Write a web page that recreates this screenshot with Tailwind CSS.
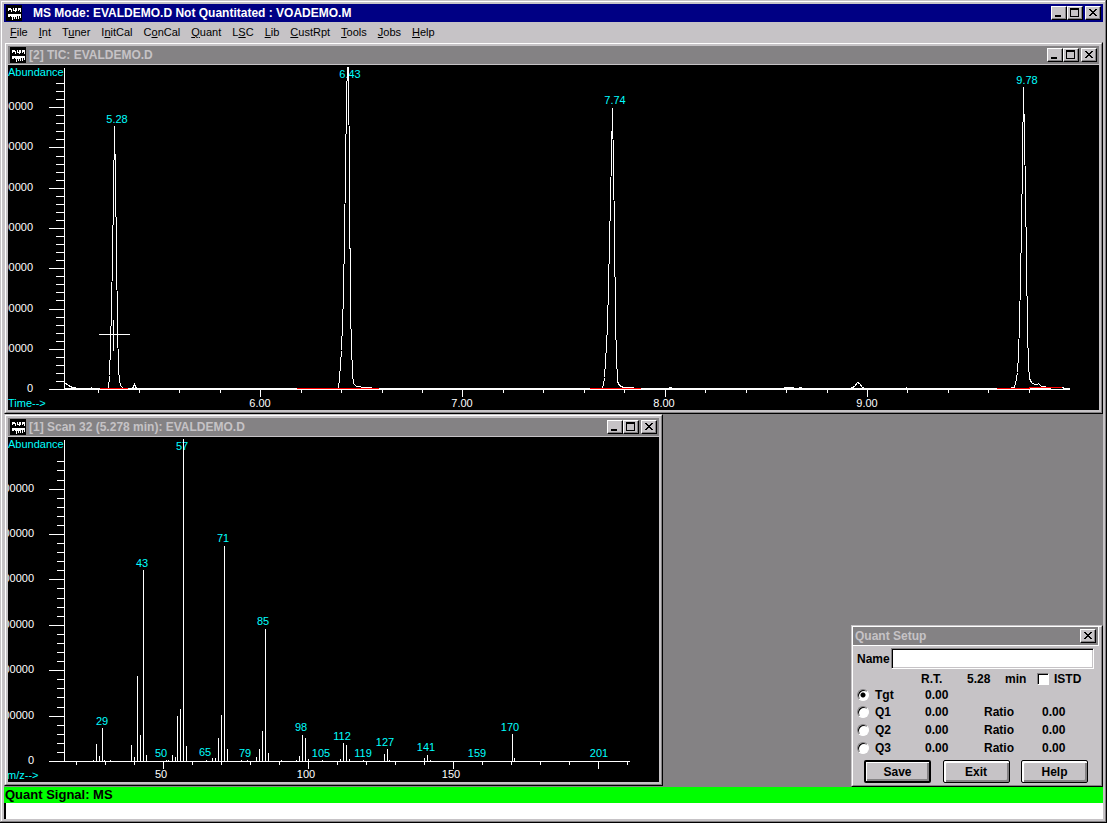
<!DOCTYPE html>
<html lang="en">
<head>
    <meta charset="UTF-8">
    <meta name="viewport" content="width=device-width, initial-scale=1.0">
    <title>MS Mode: EVALDEMO.D</title>
    <script src="https://cdn.jsdelivr.net/npm/@tailwindcss/browser@4"></script>
</head>
<body class="h-screen overflow-hidden bg-[#c6c3c6] font-['Liberation_Sans',Arial,sans-serif] text-[11px] leading-4 text-black">
    <!-- Shared glyphs -->
    <svg class="hidden">
        <symbol id="app-icon" viewBox="0 0 16 16">
            <rect width="16" height="16" fill="#000"/>
            <path fill="#fff" d="M2 3h3v1h1v3H5V5H3v1H2zM7 3h1v2h1V3h2v3h-1v1H9V6H7zM12 3h3v4h-1V5h-1v1h-1zM2 9h13v4h-1v-2h-1v3h-1v-3h-1v3h-1v-2H9v2H8v-2H7v3H6v-3H5v-1H4v1H2z"/>
        </symbol>
        <symbol id="minimize" viewBox="0 0 12 10"><path fill="#000" d="M2 7h6v2H2z"/></symbol>
        <symbol id="maximize" viewBox="0 0 12 10"><path fill="#000" fill-rule="evenodd" d="M1 0h9v9H1zM2 2v6h7V2z"/></symbol>
        <symbol id="close" viewBox="0 0 12 10"><path fill="#000" d="M2 1h2v1h1v1h2V2h1V1h2v1H9v1H8v1H7v1h1v1h1v1h1v1H8V7H7V6H5v1H4v1H2V7h1V6h1V5h1V4H4V3H3V2H2z"/></symbol>
    </svg>

    <div class="flex h-full flex-col border-r border-b border-black">
        <div class="flex min-h-0 flex-1 flex-col border border-t-[#c6c3c6] border-l-[#c6c3c6] border-r-[#848284] border-b-[#848284]">
            <div class="flex min-h-0 flex-1 flex-col border-t border-l border-white p-[2px]">

                <!-- Main title bar -->
                <header class="flex h-[18px] shrink-0 items-center bg-[#000084] px-[2px] text-white">
                    <svg class="h-4 w-4" shape-rendering="crispEdges"><use href="#app-icon"/></svg>
                    <h1 class="ml-[11px] flex-1 text-[12px] font-bold whitespace-nowrap">MS Mode: EVALDEMO.D Not Quantitated : VOADEMO.M</h1>
                    <button aria-label="Minimize" class="h-[14px] w-4 border border-t-white border-l-white border-r-black border-b-black bg-[#c6c3c6] pl-px shadow-[inset_-1px_-1px_#848284]"><svg class="h-[10px] w-3" shape-rendering="crispEdges"><use href="#minimize"/></svg></button>
                    <button aria-label="Maximize" class="h-[14px] w-4 border border-t-white border-l-white border-r-black border-b-black bg-[#c6c3c6] pl-px shadow-[inset_-1px_-1px_#848284]"><svg class="h-[10px] w-3" shape-rendering="crispEdges"><use href="#maximize"/></svg></button>
                    <button aria-label="Close" class="ml-[2px] h-[14px] w-4 border border-t-white border-l-white border-r-black border-b-black bg-[#c6c3c6] pl-px shadow-[inset_-1px_-1px_#848284]"><svg class="h-[10px] w-3" shape-rendering="crispEdges"><use href="#close"/></svg></button>
                </header>

                <!-- Menu -->
                <nav class="flex h-5 shrink-0 items-center gap-[11px] pl-[6px]">
                    <button><u>F</u>ile</button>
                    <button><u>I</u>nt</button>
                    <button>T<u>u</u>ner</button>
                    <button>I<u>n</u>itCal</button>
                    <button>C<u>o</u>nCal</button>
                    <button><u>Q</u>uant</button>
                    <button>L<u>S</u>C</button>
                    <button><u>L</u>ib</button>
                    <button><u>C</u>ustRpt</button>
                    <button><u>T</u>ools</button>
                    <button><u>J</u>obs</button>
                    <button><u>H</u>elp</button>
                </nav>

                <!-- MDI desktop -->
                <main class="relative min-h-0 flex-1 bg-[#848284]">

                    <!-- TIC window -->
                    <section class="absolute inset-x-0 top-0 flex h-[372px] flex-col border border-t-[#c6c3c6] border-l-[#c6c3c6] border-r-black border-b-black bg-[#c6c3c6]">
                        <div class="flex min-h-0 flex-1 flex-col border border-t-white border-l-white border-r-[#848284] border-b-[#848284] p-[2px]">
                            <div class="flex h-[18px] shrink-0 items-center bg-[#848284] px-[2px] text-[#c6c3c6]">
                                <svg class="h-4 w-4" shape-rendering="crispEdges"><use href="#app-icon"/></svg>
                                <h2 class="ml-[3px] flex-1 text-[12px] font-bold whitespace-nowrap">[2] TIC: EVALDEMO.D</h2>
                                <button aria-label="Minimize" class="h-[14px] w-4 border border-t-white border-l-white border-r-black border-b-black bg-[#c6c3c6] pl-px shadow-[inset_-1px_-1px_#848284]"><svg class="h-[10px] w-3" shape-rendering="crispEdges"><use href="#minimize"/></svg></button>
                                <button aria-label="Maximize" class="h-[14px] w-4 border border-t-white border-l-white border-r-black border-b-black bg-[#c6c3c6] pl-px shadow-[inset_-1px_-1px_#848284]"><svg class="h-[10px] w-3" shape-rendering="crispEdges"><use href="#maximize"/></svg></button>
                                <button aria-label="Close" class="ml-[2px] h-[14px] w-4 border border-t-white border-l-white border-r-black border-b-black bg-[#c6c3c6] pl-px shadow-[inset_-1px_-1px_#848284]"><svg class="h-[10px] w-3" shape-rendering="crispEdges"><use href="#close"/></svg></button>
                            </div>
                            <div class="mt-px min-h-0 flex-1 bg-black">
                                <svg class="block h-full w-full overflow-hidden" stroke="#fff" stroke-linecap="square" fill="none" shape-rendering="crispEdges">
                                    <g id="ticLabels" stroke="none" fill="#fff" transform="translate(-8 -65)">
                                        <g fill="#0ff">
                                            <text x="8" y="76">Abundance</text>
                                            <text x="8" y="407">Time--&gt;</text>
                                            <text x="117" y="123" text-anchor="middle">5.28</text>
                                            <text x="350" y="78" text-anchor="middle">6.43</text>
                                            <text x="615" y="104" text-anchor="middle">7.74</text>
                                            <text x="1027" y="84" text-anchor="middle">9.78</text>
                                        </g>
                                        <text x="260" y="407" text-anchor="middle">6.00</text>
                                        <text x="462" y="407" text-anchor="middle">7.00</text>
                                        <text x="664" y="407" text-anchor="middle">8.00</text>
                                        <text x="867" y="407" text-anchor="middle">9.00</text>
                                    </g>
                                    <g transform="translate(-7.5 -64.5)">
                                        <path id="ticAxis"/>
                                        <path d="M64 388H1050"/>
                                        <path d="M64 382L68 385L72 387L79 388H90L91 387L92 388H108L109 375L110 345L111 307L112 257L113 195L114 126L115 180L116 251L117 327L118 368L119 380L120 385L123 388H132L134 384L136 388H338L339 378L341 350L343 295L345 174L346 95L347 67"/>
                                        <path d="M348 67L349 180L350 311L351 345L352 374L353 383L356 386L365 387L378 388H602L603 384L604 377L605 361L606 344L607 325L608 285L610 200L612 108L614 230L615 322L616 356L617 381L619 385L623 387H632L635 388H668L670 387L673 388H782L785 387H792L794 388H798L800 387L803 388H850L854 386L857 382L859 383L862 387L865 388H905L906 387L907 388H1008L1014 387L1016 378L1017 372L1018 353L1019 324L1021 230L1023 87L1025 190L1027 330L1028 365L1029 378L1031 382L1034 384H1037L1038 383L1041 386L1050 387H1062L1064 388H1069"/>
                                        <path stroke="#f00" d="M100 388H127M297 388H378M590 388H640M997 388H1029M1029 387H1061"/>
                                        <path d="M99 334H129M113 320V350"/>
                                    </g>
                                </svg>
                            </div>
                        </div>
                    </section>

                    <!-- Scan window -->
                    <section class="absolute top-[372px] left-0 flex h-[372px] w-[60%] max-w-[659px] flex-col border border-t-[#c6c3c6] border-l-[#c6c3c6] border-r-black border-b-black bg-[#c6c3c6]">
                        <div class="flex min-h-0 flex-1 flex-col border border-t-white border-l-white border-r-[#848284] border-b-[#848284] p-[2px]">
                            <div class="flex h-[18px] shrink-0 items-center bg-[#848284] px-[2px] text-[#c6c3c6]">
                                <svg class="h-4 w-4" shape-rendering="crispEdges"><use href="#app-icon"/></svg>
                                <h2 class="ml-[3px] flex-1 text-[12px] font-bold whitespace-nowrap">[1] Scan 32 (5.278 min): EVALDEMO.D</h2>
                                <button aria-label="Minimize" class="h-[14px] w-4 border border-t-white border-l-white border-r-black border-b-black bg-[#c6c3c6] pl-px shadow-[inset_-1px_-1px_#848284]"><svg class="h-[10px] w-3" shape-rendering="crispEdges"><use href="#minimize"/></svg></button>
                                <button aria-label="Maximize" class="h-[14px] w-4 border border-t-white border-l-white border-r-black border-b-black bg-[#c6c3c6] pl-px shadow-[inset_-1px_-1px_#848284]"><svg class="h-[10px] w-3" shape-rendering="crispEdges"><use href="#maximize"/></svg></button>
                                <button aria-label="Close" class="ml-[2px] h-[14px] w-4 border border-t-white border-l-white border-r-black border-b-black bg-[#c6c3c6] pl-px shadow-[inset_-1px_-1px_#848284]"><svg class="h-[10px] w-3" shape-rendering="crispEdges"><use href="#close"/></svg></button>
                            </div>
                            <div class="mt-px min-h-0 flex-1 bg-black">
                                <svg class="block h-full w-full overflow-hidden" stroke="#fff" stroke-linecap="square" fill="none" shape-rendering="crispEdges">
                                    <g id="scanLabels" stroke="none" fill="#fff" transform="translate(-8 -437)">
                                        <text x="8" y="448" fill="#0ff">Abundance</text>
                                        <text x="7" y="779" fill="#0ff">m/z--&gt;</text>
                                        <text x="161" y="778" text-anchor="middle">50</text>
                                        <text x="306" y="778" text-anchor="middle">100</text>
                                        <text x="451" y="778" text-anchor="middle">150</text>
                                    </g>
                                    <g transform="translate(-7.5 -436.5)">
                                        <path id="scanAxis"/>
                                        <path id="scanSticks"/>
                                    </g>
                                </svg>
                            </div>
                        </div>
                    </section>

                    <!-- Quant Setup dialog -->
                    <form class="absolute right-0 bottom-0 flex h-[162px] w-[252px] flex-col border border-t-[#c6c3c6] border-l-[#c6c3c6] border-r-black border-b-black bg-[#c6c3c6] text-[12px] font-bold" onsubmit="return false">
                        <div class="flex flex-1 flex-col border border-t-white border-l-white border-r-[#848284] border-b-[#848284]">
                            <div class="mr-[2px] flex h-[19px] shrink-0 items-center border-r border-b border-white bg-[#848284] px-[2px] text-[#c6c3c6]">
                                <h2 class="flex-1">Quant Setup</h2>
                                <button type="button" aria-label="Close" class="h-[14px] w-4 border border-t-white border-l-white border-r-black border-b-black bg-[#c6c3c6] pl-px shadow-[inset_-1px_-1px_#848284]"><svg class="h-[10px] w-3" shape-rendering="crispEdges"><use href="#close"/></svg></button>
                            </div>
                            <div class="mt-[2px] flex items-center pr-[7px] pl-1">
                                <label for="name" class="w-[34px]">Name</label>
                                <input id="name" type="text" class="h-[21px] min-w-0 flex-1 border border-t-[#848284] border-l-[#848284] border-r-white border-b-white bg-white px-1 shadow-[inset_1px_1px_#000,inset_-1px_-1px_#c6c3c6] outline-none">
                            </div>
                            <div class="mt-[2px] flex items-center pl-[68px]">
                                <span class="w-[46px]">R.T.</span>
                                <span class="w-[38px]">5.28</span>
                                <span class="w-[32px]">min</span>
                                <input id="istd" type="checkbox" class="mr-[5px] h-3 w-3 appearance-none border border-t-[#848284] border-l-[#848284] border-r-white border-b-white bg-white shadow-[inset_1px_1px_#000] checked:bg-black">
                                <label for="istd">ISTD</label>
                            </div>
                            <div class="grid grid-cols-[18px_50px_59px_58px_1fr] grid-rows-[16px_18px_18px_18px] items-center pl-1">
                                <input id="tgt" name="ion" type="radio" checked class="h-3 w-3 appearance-none rounded-full border border-t-[#848284] border-l-[#848284] border-r-white border-b-white bg-white shadow-[inset_1px_1px_#000] checked:bg-[radial-gradient(circle,#000_2px,#fff_3px)]">
                                <label for="tgt">Tgt</label><span>0.00</span><span></span><span></span>
                                <input id="q1" name="ion" type="radio" class="h-3 w-3 appearance-none rounded-full border border-t-[#848284] border-l-[#848284] border-r-white border-b-white bg-white shadow-[inset_1px_1px_#000] checked:bg-[radial-gradient(circle,#000_2px,#fff_3px)]">
                                <label for="q1">Q1</label><span>0.00</span><span>Ratio</span><span>0.00</span>
                                <input id="q2" name="ion" type="radio" class="h-3 w-3 appearance-none rounded-full border border-t-[#848284] border-l-[#848284] border-r-white border-b-white bg-white shadow-[inset_1px_1px_#000] checked:bg-[radial-gradient(circle,#000_2px,#fff_3px)]">
                                <label for="q2">Q2</label><span>0.00</span><span>Ratio</span><span>0.00</span>
                                <input id="q3" name="ion" type="radio" class="h-3 w-3 appearance-none rounded-full border border-t-[#848284] border-l-[#848284] border-r-white border-b-white bg-white shadow-[inset_1px_1px_#000] checked:bg-[radial-gradient(circle,#000_2px,#fff_3px)]">
                                <label for="q3">Q3</label><span>0.00</span><span>Ratio</span><span>0.00</span>
                            </div>
                            <div class="mt-[3px] flex justify-between pr-[13px] pl-[11px]">
                                <button class="h-[23px] w-[67px] rounded-[2px] border-2 border-black bg-[#c6c3c6] leading-4 shadow-[inset_1px_1px_#fff,inset_-2px_-2px_#848284]">Save</button>
                                <button type="button" class="h-[23px] w-[67px] rounded-[2px] border border-black bg-[#c6c3c6] leading-4 shadow-[inset_2px_2px_#fff,inset_-2px_-2px_#848284]">Exit</button>
                                <button type="button" class="h-[23px] w-[67px] rounded-[2px] border border-black bg-[#c6c3c6] leading-4 shadow-[inset_2px_2px_#fff,inset_-2px_-2px_#848284]">Help</button>
                            </div>
                        </div>
                    </form>
                </main>

                <!-- Status and command line -->
                <div class="h-4 shrink-0 bg-[#00ff00] pl-px text-[13px] font-bold">Quant Signal: MS</div>
                <input type="text" aria-label="Command" class="h-4 shrink-0 border-l-2 border-black bg-white px-1 outline-none">
            </div>
        </div>
    </div>

    <script>
        // m/z sticks: [x, top]
        const sticks = [
            [93, 760], [96, 744], [99, 756], [102, 728], [104, 760], [110, 760],
            [131, 745], [134, 757], [137, 676], [140, 735], [143, 570], [146, 755],
            [166, 760], [168, 760], [172, 755], [175, 757], [177, 716], [180, 709], [183, 439], [186, 746],
            [206, 760], [212, 758], [215, 758], [218, 738], [221, 715], [224, 546], [227, 749],
            [241, 760], [247, 760], [256, 757], [259, 749], [262, 731], [265, 629], [268, 753],
            [281, 760], [296, 760], [299, 756], [302, 735], [305, 738], [308, 759], [322, 760],
            [340, 759], [343, 743], [346, 745], [349, 759], [363, 760], [384, 754], [387, 749], [389, 760],
            [424, 758], [427, 755], [430, 760], [512, 734], [514, 758]
        ];
        // m/z captions: [text, centre, baseline]
        const captions = [
            ['29', 102, 725], ['43', 142, 567], ['57', 182, 450], ['71', 223, 542], ['85', 263, 625],
            ['50', 161, 757], ['65', 205, 756], ['79', 245, 757], ['98', 301, 731], ['105', 321, 757],
            ['112', 342, 740], ['119', 363, 757], ['127', 385, 746], ['141', 426, 751], ['159', 477, 757],
            ['170', 510, 731], ['201', 599, 757]
        ];

        function addText(group, text, x, y, anchor, color) {
            const el = document.createElementNS('http://www.w3.org/2000/svg', 'text');
            el.textContent = text;
            el.setAttribute('x', x);
            el.setAttribute('y', y);
            el.setAttribute('text-anchor', anchor);
            if (color) el.setAttribute('fill', color);
            document.getElementById(group).appendChild(el);
        }

        function drawAxis(o) {
            let d = `M64 ${o.top}V${o.base}M49 ${o.base}H${o.right}`;
            for (let i = 1; i <= o.yCount; i++) {
                const y = Math.round(o.base - i * o.yStep);
                d += `M${i % 5 ? o.minor : 49} ${y}H64`;
                if (i % 5 === 0) addText(o.labels, '00000', o.labelX, y + 3, 'end');
            }
            addText(o.labels, '0', o.labelX, o.base + 3, 'end');
            for (let i = 0; i < o.xCount; i++) {
                const x = Math.round(o.xStart + i * o.xStep);
                d += `M${x} ${o.base}v${i % 5 === o.xMajor ? 7 : 3}`;
            }
            document.getElementById(o.axis).setAttribute('d', d);
        }

        drawAxis({ axis: 'ticAxis', labels: 'ticLabels', top: 68, base: 389, right: 1069, minor: 56, yStep: 8.05, yCount: 38, labelX: 33, xStart: 98.4, xStep: 40.45, xCount: 24, xMajor: 4 });
        drawAxis({ axis: 'scanAxis', labels: 'scanLabels', top: 440, base: 761, right: 629, minor: 57, yStep: 9.08, yCount: 33, labelX: 34, xStart: 76, xStep: 29, xCount: 20, xMajor: 3 });

        document.getElementById('scanSticks').setAttribute('d', sticks.map(s => `M${s[0]} ${s[1]}V761`).join(''));
        captions.forEach(c => addText('scanLabels', c[0], c[1], c[2], 'middle', '#0ff'));
    </script>
</body>
</html>
